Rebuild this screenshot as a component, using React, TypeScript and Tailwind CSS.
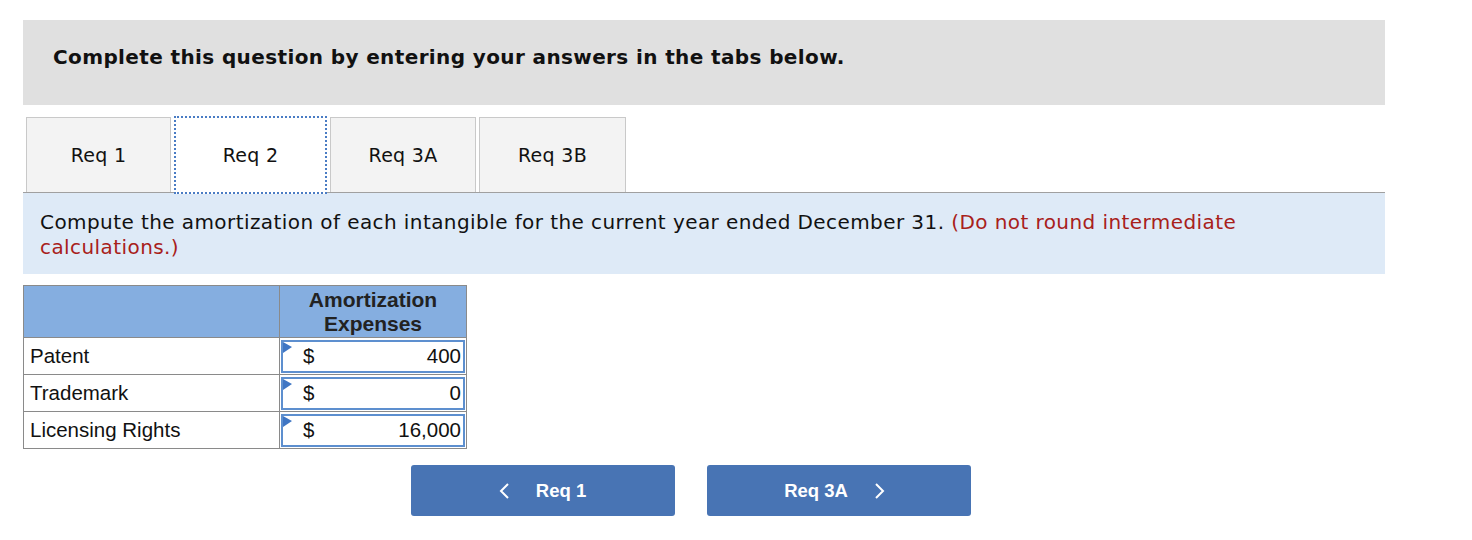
import React from "react"

const tabs = [
  { label: "Req 1", w: "w-[145px]" },
  { label: "Req 2", w: "w-[153px]", active: true },
  { label: "Req 3A", w: "w-[146px]" },
  { label: "Req 3B", w: "w-[147px]" },
]

const rows = [
  { name: "Patent", value: "400" },
  { name: "Trademark", value: "0" },
  { name: "Licensing Rights", value: "16,000" },
]

function Flag() {
  return (
    <svg className="absolute left-0 top-0" width="9" height="11" viewBox="0 0 9 11">
      <polygon points="0,0 9,5 0,11" fill="#3f76c4" />
    </svg>
  )
}

export default function App() {
  return (
    <div className="min-h-[540px] bg-white pl-[23px] pt-[20px]" style={{ fontFamily: '"DejaVu Sans", Verdana, sans-serif' }}>
      <div className="w-[1362px]">
        {/* Header */}
        <div className="h-[85px] bg-[#e0e0e0] flex items-center pl-[30px] pb-[11px]">
          <h1 className="text-[20px] font-bold text-[#111] tracking-[0.38px]">
            Complete this question by entering your answers in the tabs below.
          </h1>
        </div>

        {/* Tabs */}
        <div className="mt-[12px] flex items-end gap-[3px] pl-[3px] border-b border-[#a0a0a0] h-[76px]">
          {tabs.map((t) =>
            t.active ? (
              <div
                key={t.label}
                className={`${t.w} h-[78px] -mb-[2px] bg-white border-2 border-dotted border-[#4a7cc4] flex items-center justify-center text-[19px] tracking-[0.3px] text-[#111]`}
              >
                {t.label}
              </div>
            ) : (
              <div
                key={t.label}
                className={`${t.w} h-[75px] bg-[#f3f3f3] border border-b-0 border-[#c9c9c9] flex items-center justify-center text-[19px] tracking-[0.3px] text-[#111]`}
              >
                {t.label}
              </div>
            )
          )}
        </div>

        {/* Instructions */}
        <div className="h-[81px] bg-[#deeaf7] pl-[17px] pr-[20px] pt-[17px] text-[20px] leading-[25px] tracking-[0.42px] text-[#111]">
          Compute the amortization of each intangible for the current year ended December 31.{" "}
          <span className="text-[#a8201a]">(Do not round intermediate calculations.)</span>
        </div>

        {/* Table */}
        <table
          className="mt-[11px] border-collapse border border-[#8a8a8a] text-[20.5px] text-[#111]"
          style={{ fontFamily: '"Liberation Sans", Arial, sans-serif' }}
        >
          <thead>
            <tr className="bg-[#85aee0] h-[52px]">
              <th className="w-[256px] border border-[#8a8a8a]"></th>
              <th className="w-[187px] border border-[#8a8a8a] font-bold text-[21px] leading-[24px] text-[#222]">
                Amortization
                <br />
                Expenses
              </th>
            </tr>
          </thead>
          <tbody>
            {rows.map((r) => (
              <tr key={r.name} className="h-[37px]">
                <td className="border border-[#8a8a8a] pl-[6px] pt-[1px]">{r.name}</td>
                <td className="border border-[#8a8a8a] p-[1px]">
                  <div className="relative h-[33px] border-2 border-[#5d8fcf] bg-white flex items-center justify-between pl-[20px] pr-[2px]">
                    <Flag />
                    <span>$</span>
                    <span>{r.value}</span>
                  </div>
                </td>
              </tr>
            ))}
          </tbody>
        </table>

        {/* Navigation */}
        <div className="mt-[16px] ml-[388px] flex gap-[32px]" style={{ fontFamily: '"Liberation Sans", Arial, sans-serif' }}>
          <button className="w-[264px] h-[51px] rounded-[3px] bg-[#4874b4] text-white font-bold text-[18.5px] flex items-center justify-center gap-[26px] pr-[2px]">
            <svg width="12" height="18" viewBox="0 0 12 18" fill="none" stroke="white" strokeWidth="2">
              <polyline points="10,2 3,9 10,16" />
            </svg>
            <span>Req 1</span>
          </button>
          <button className="w-[264px] h-[51px] rounded-[3px] bg-[#4874b4] text-white font-bold text-[18.5px] flex items-center justify-center gap-[26px] pr-[8px]">
            <span>Req 3A</span>
            <svg width="12" height="18" viewBox="0 0 12 18" fill="none" stroke="white" strokeWidth="2">
              <polyline points="2,2 9,9 2,16" />
            </svg>
          </button>
        </div>
      </div>
    </div>
  )
}
